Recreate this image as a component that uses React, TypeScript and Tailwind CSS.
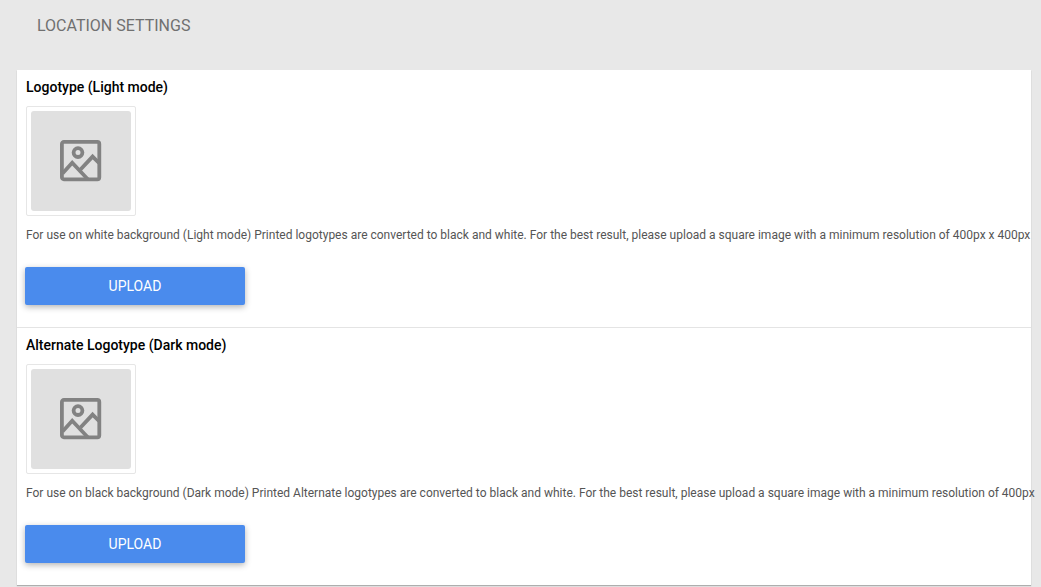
interface LogoSectionProps {
  id: string;
  title: string;
  description: string;
}

const sections: LogoSectionProps[] = [
  {
    id: "light",
    title: "Logotype (Light mode)",
    description:
      "For use on white background (Light mode) Printed logotypes are converted to black and white. For the best result, please upload a square image with a minimum resolution of 400px x 400px",
  },
  {
    id: "dark",
    title: "Alternate Logotype (Dark mode)",
    description:
      "For use on black background (Dark mode) Printed Alternate logotypes are converted to black and white. For the best result, please upload a square image with a minimum resolution of 400px",
  },
];

function ImagePlaceholder() {
  return (
    <div className="mt-2.5 w-fit rounded-xs border border-[#e6e6e6] bg-white p-1">
      <div className="flex size-[100px] items-center justify-center rounded-[3px] bg-[#e0e0e0]">
        <svg width="42" height="42" viewBox="0 0 42 42" fill="none" stroke="#828282" strokeWidth="3.8" aria-hidden="true">
          <rect x="1.9" y="1.9" width="37.4" height="37.4" rx="2" />
          <circle cx="18" cy="12.6" r="4.4" />
          <path d="M2.5 33.5 L12.2 22.8 L28 39.5" />
          <path d="M20.5 29.5 L32.6 16.6 L39 23" />
        </svg>
      </div>
    </div>
  );
}

function LogoSection({ id, title, description }: LogoSectionProps) {
  return (
    <section aria-labelledby={id} className="border-b border-[#e4e4e4] px-[9px] pt-2 pb-[22px] last:border-b-0">
      <h2 id={id} className="text-sm leading-[18px] font-medium text-black">
        {title}
      </h2>
      <ImagePlaceholder />
      <p className="mt-2.5 text-xs leading-[18px] whitespace-nowrap text-[#555555]">{description}</p>
      <button
        type="button"
        className="mt-[23px] -ml-px block h-[38px] w-[220px] rounded-xs bg-[#4a8bed] text-sm text-white shadow-[0_2px_6px_rgba(0,0,0,0.3)]"
      >
        UPLOAD
      </button>
    </section>
  );
}

export default function App() {
  return (
    <main className="min-h-screen overflow-hidden bg-[#e8e8e8] font-[Roboto,sans-serif]">
      <header className="flex h-[70px] items-start px-[37px] pt-3.5">
        <h1 className="text-base leading-6 text-[#707070]">LOCATION SETTINGS</h1>
      </header>
      <div className="mr-2.5 ml-[17px] bg-white shadow-[0_1px_1px_rgba(0,0,0,0.25)]">
        {sections.map((section) => (
          <LogoSection key={section.id} {...section} />
        ))}
      </div>
    </main>
  );
}
